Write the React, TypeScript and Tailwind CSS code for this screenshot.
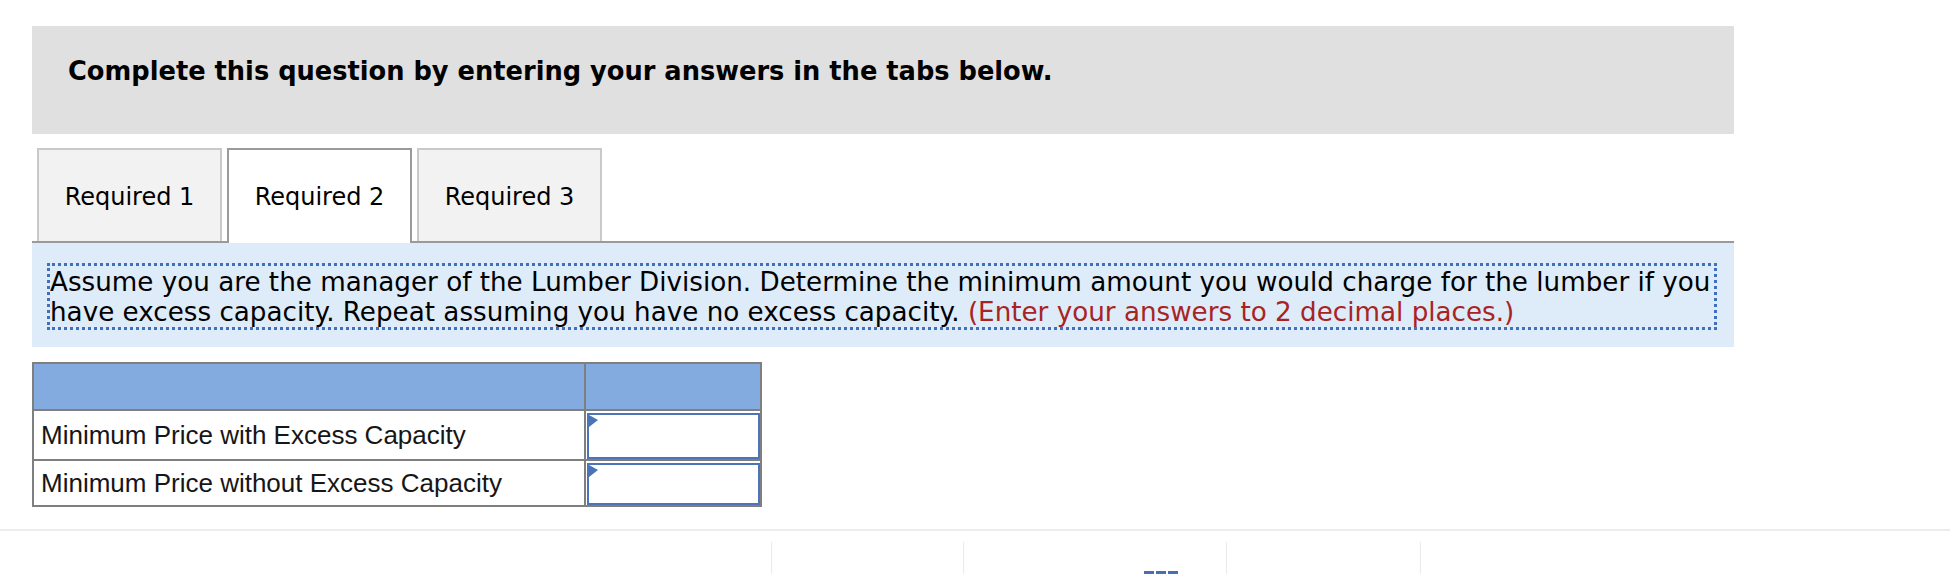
import { useState } from 'react';

const tabs = ['Required 1', 'Required 2', 'Required 3'];

const rows = [
  { label: 'Minimum Price with Excess Capacity', rowClass: 'h-[50px] border-b-2' },
  { label: 'Minimum Price without Excess Capacity', rowClass: 'h-[44px]' },
];

const Flag = () => (
  <svg className="absolute left-0 top-0" width="9" height="12" viewBox="0 0 9 12">
    <polygon points="0,0 9,5 0,12" fill="#4a73b8" />
  </svg>
);

const App = () => {
  const [active, setActive] = useState(1);

  return (
    <div className="min-h-screen bg-white font-['DejaVu_Sans',Verdana,sans-serif] text-black">
      <div className="w-[1734px] pl-8 pt-[26px]">
        {/* Instruction banner */}
        <div className="h-[108px] bg-[#e0e0e0] pl-9 pt-[30px] text-[25.7px] font-bold leading-[30px]">
          Complete this question by entering your answers in the tabs below.
        </div>

        {/* Tabs */}
        <div className="mt-[14px] flex items-start gap-[5px] border-b-2 border-[#9a9a9a] pl-[5px]">
          {tabs.map((t, i) =>
            i === active ? (
              <button
                key={t}
                onClick={() => setActive(i)}
                className="relative z-10 -mb-[2px] flex h-[95px] w-[185px] items-center justify-center border-x-2 border-t-2 border-[#9a9a9a] bg-white text-[24px]"
              >
                {t}
              </button>
            ) : (
              <button
                key={t}
                onClick={() => setActive(i)}
                className="flex h-[93px] w-[185px] items-center justify-center border-x-2 border-t-2 border-[#c9c9c9] bg-[#f2f2f2] pt-[2px] text-[24px]"
              >
                {t}
              </button>
            )
          )}
        </div>

        {/* Question */}
        <div className="bg-[#deebf8] pb-[17px] pl-[15px] pr-[17px] pt-[20px]">
          <div className="whitespace-nowrap border-[3px] border-dotted border-[#3f6fbd] pt-[1px] text-[26.2px] leading-[30px]">
            Assume you are the manager of the Lumber Division. Determine the minimum amount you would charge for the lumber if you
            <br />
            have excess capacity. Repeat assuming you have no excess capacity.{' '}
            <span className="text-[#a82424]">(Enter your answers to 2 decimal places.)</span>
          </div>
        </div>

        {/* Answer table */}
        <div className="mt-[15px] w-[730px] border-2 border-[#7f7f7f] font-['Liberation_Sans',Arial,sans-serif] text-[26px] text-[#161616]">
          <div className="flex h-[47px] border-b-2 border-[#7f7f7f] bg-[#83abdf]">
            <div className="w-[552px] border-r-2 border-[#7f7f7f]" />
            <div className="flex-1" />
          </div>
          {rows.map((r) => (
            <div key={r.label} className={`flex border-[#7f7f7f] ${r.rowClass}`}>
              <div className="flex w-[552px] items-center border-r-2 border-[#7f7f7f] pl-[7px]">{r.label}</div>
              <div className="flex flex-1 flex-col pl-[1px] pt-[2px]">
                <div className="relative flex-1 border-2 border-[#4d74b8] bg-white">
                  <Flag />
                </div>
              </div>
            </div>
          ))}
        </div>
      </div>

      {/* Footer */}
      <div className="mt-[22px] border-t-2 border-[#ececec] pt-[11px]">
        <div className="flex h-[40px]">
          <div className="w-[771px]" />
          <div className="w-[192px] border-l border-[#ebebeb]" />
          <div className="w-[263px] border-l border-[#ebebeb] pl-[180px] pt-[29px]">
            <div className="flex gap-[2px]">
              <div className="h-[3px] w-[10px] bg-[#4a6fb0]" />
              <div className="h-[3px] w-[10px] bg-[#4a6fb0]" />
              <div className="h-[3px] w-[10px] bg-[#4a6fb0]" />
            </div>
          </div>
          <div className="w-[194px] border-l border-[#ebebeb]" />
          <div className="flex-1 border-l border-[#ebebeb]" />
        </div>
      </div>
    </div>
  );
};

export default App;
